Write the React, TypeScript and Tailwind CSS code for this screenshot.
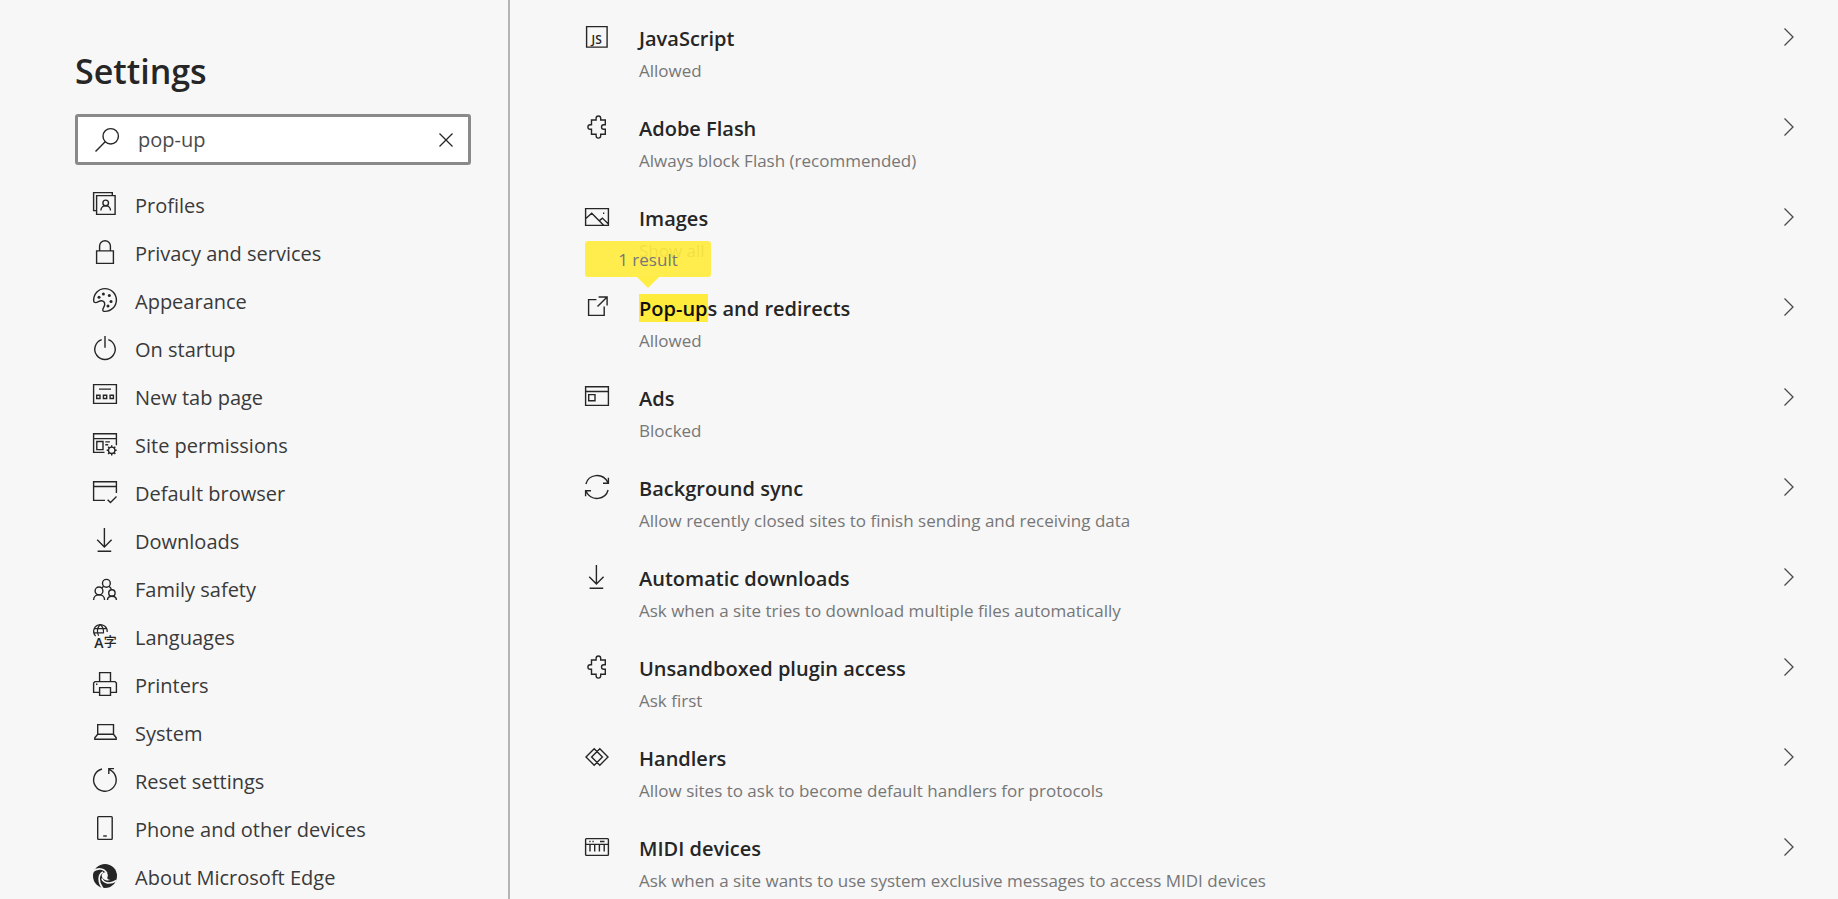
import { useState } from 'react';
import type { ReactNode } from 'react';

interface NavItem {
  label: string;
  icon: ReactNode;
}

interface Permission {
  title: string;
  detail: string;
  icon: ReactNode;
}

function Icon({ children }: { children: ReactNode }) {
  return (
    <svg
      viewBox="0 0 24 24"
      fill="none"
      stroke="currentColor"
      strokeWidth="1.4"
      aria-hidden="true"
      className="size-6 shrink-0 overflow-visible"
    >
      {children}
    </svg>
  );
}

const downloadIcon = (
  <Icon>
    <path d="M11.4 0v18.8M4.2 11.7l7.2 7.2 7.2-7.2M4.6 23.2h13.6" />
  </Icon>
);

const puzzleIcon = (
  <Icon>
    <path d="M6.5 5h4.6V3.3a2.3 2.3 0 0 1 4.6 0V5h4.6v4.7h-1.5a2.3 2.3 0 0 0 0 4.6h1.5v4.9h-4.6v1.6a2.3 2.3 0 0 1-4.6 0v-1.6H6.5v-4.9H5.2a2.3 2.3 0 0 1 0-4.6h1.3z" />
  </Icon>
);

const NAV_ITEMS: NavItem[] = [
  {
    label: 'Profiles',
    icon: (
      <Icon>
        <path d="M3.5 18.6H.6V.6h18.7v3M3.6 3.6h18.5v18.8H3.6z" />
        <circle cx="12.7" cy="10.9" r="2.8" />
        <path d="M7.9 18.4c0-6.2 9.6-6.2 9.6 0" />
      </Icon>
    ),
  },
  {
    label: 'Privacy and services',
    icon: (
      <Icon>
        <path d="M3.6 10.9h16.8v12.5H3.6zM6.6 10.9V6.1a5.4 5.4 0 0 1 10.8 0v4.8" />
      </Icon>
    ),
  },
  {
    label: 'Appearance',
    icon: (
      <Icon>
        <path d="M.7 13.2C.3 6.3 5.3.6 12 .6a11.4 11.4 0 0 1 0 22.8c-1.6 0-2.5-.5-2.2-1.9.4-2.1 2-3.2 1.9-5.2 0-2-1.2-3.4-3.2-3.6-2.3-.2-3.7 1.9-5.8 1.9-1.2 0-1.9-.4-2-1.4z" />
        <g fill="currentColor" stroke="none">
          <circle cx="6" cy="9.3" r="1.5" />
          <circle cx="10.4" cy="5.9" r="1.5" />
          <circle cx="16.3" cy="7.6" r="1.5" />
          <circle cx="18" cy="13.4" r="1.5" />
          <circle cx="15" cy="18" r="1.5" />
        </g>
      </Icon>
    ),
  },
  {
    label: 'On startup',
    icon: (
      <Icon>
        <path d="M12 0v11.7M8.7 3.6a10.2 10.2 0 1 0 6.6 0" />
      </Icon>
    ),
  },
  {
    label: 'New tab page',
    icon: (
      <Icon>
        <path d="M.6.6h22.8v18.8H.6zM6 5.1h12M3.7 11.2H7v3.3H3.7zM10.4 11.2h3.3v3.3h-3.3zM17.1 11.2h3.3v3.3h-3.3z" />
      </Icon>
    ),
  },
  {
    label: 'Site permissions',
    icon: (
      <Icon>
        <path d="M11.5 20.4H.6V1.7h22.8v11.5M.6 6.6h22.8M3.8 9.5H10v8.1H3.8zM12.3 9.9h4.6M12.3 12.7h2.9" />
        <circle cx="18.7" cy="18.3" r="3.2" />
        <path d="M18.7 13.2v1.9M18.7 21.5v1.9M13.7 18.3h1.8M21.9 18.3h1.8M15.1 14.7l1.3 1.3M21 20.6l1.3 1.3M15.1 21.9l1.3-1.3M21 16l1.3-1.3" />
      </Icon>
    ),
  },
  {
    label: 'Default browser',
    icon: (
      <Icon>
        <path d="M12 20.4H.6V1.7h22.8V13M.6 6.5h22.8M14.6 19.7l2.9 2.9 6-6" />
      </Icon>
    ),
  },
  { label: 'Downloads', icon: downloadIcon },
  {
    label: 'Family safety',
    icon: (
      <Icon>
        <circle cx="13.4" cy="7.3" r="3.9" />
        <circle cx="6" cy="14.9" r="3.9" />
        <circle cx="18.9" cy="17" r="3.2" />
        <path d="M.6 24c0-6.9 11-6.9 11 0M14.5 24c0-5.1 8.9-5.1 8.9 0M8.6 12.2l2-2M16 10.3c1.2 1 2.1 2.2 2.5 3.6" />
      </Icon>
    ),
  },
  {
    label: 'Languages',
    icon: (
      <Icon>
        <path
          strokeWidth="1.2"
          d="M2.6 12.2A6.8 6.8 0 1 1 14.2 8M7.3.5C3.8 3.6 3.8 9 5.6 11.8M7.3.5c2.600 2.300 3.500 5 3.200 8.600M1.100 4.600h12.500M.6 8.900h10"
        />
        <text x="1.2" y="23.8" fontSize="14" fill="currentColor" stroke="none" className="font-['Open_Sans',sans-serif] font-semibold">
          A
        </text>
        <text x="10.8" y="22" fontSize="13" fill="currentColor" stroke="none" className="font-['Noto_Sans_CJK_JP',sans-serif] font-medium">
          字
        </text>
      </Icon>
    ),
  },
  {
    label: 'Printers',
    icon: (
      <Icon>
        <path d="M6.6 20.4h-6v-9.3L2 9.6h20l1.4 1.5v9.3h-6M6.6 9.6v-9h10.9v9M6.6 15.6h10.9v7.8H6.6z" />
        <path d="M3 12.3h1.4" />
      </Icon>
    ),
  },
  {
    label: 'System',
    icon: (
      <Icon>
        <path d="M4.7 14.3V4.6h15.8v9.7zM4.7 14.3l-2.9 3.4v1.6h21.4v-1.6l-2.7-3.4" />
      </Icon>
    ),
  },
  {
    label: 'Reset settings',
    icon: (
      <Icon>
        <path d="M9 1a11.3 11.3 0 1 0 7.5.6M21 .6h-5.2v5.3M15.8 1l3.5 2.4" />
      </Icon>
    ),
  },
  {
    label: 'Phone and other devices',
    icon: (
      <Icon>
        <rect x="4.7" y=".6" width="14.5" height="22.8" rx=".8" />
        <path d="M10.2 20h3.6" />
      </Icon>
    ),
  },
  {
    label: 'About Microsoft Edge',
    icon: (
      <Icon>
        <g stroke="none">
          <circle cx="12" cy="12" r="12" fill="currentColor" />
          <path
            stroke="#f7f7f7"
            strokeWidth="1.6"
            d="M-.5 7.6C4.5 3.2 11.6 4.3 13.8 9.4M10 8C5 10.5 4.7 18 9.8 24.5M8.8 14.5c2 5 8.2 6 14.7 2"
          />
          <path
            fill="#f7f7f7"
            d="M9.8 9.2c2.3-1.7 4.7-.7 5 1.5.3 1.900-.9 2.600-.4 3.900.3.9 1.500 1.300 3 1.400-3.400 1.300-7.300-.1-8.400-3-.5-1.400-.2-2.900.8-3.800z"
          />
        </g>
      </Icon>
    ),
  },
];

const PERMISSIONS: Permission[] = [
  {
    title: 'JavaScript',
    detail: 'Allowed',
    icon: (
      <Icon>
        <path d="M1.6 1.6h20.5v20.5H1.6z" />
        <text x="6.6" y="19.3" fontSize="12" fill="currentColor" stroke="none" className="font-['Open_Sans',sans-serif] font-semibold">
          JS
        </text>
      </Icon>
    ),
  },
  { title: 'Adobe Flash', detail: 'Always block Flash (recommended)', icon: puzzleIcon },
  {
    title: 'Images',
    detail: 'Show all',
    icon: (
      <Icon>
        <path d="M.6 3.6h22.8v16.8H.6zM.6 13.8l6.1-5.6 12.2 12.200M14.200 15.900l3.200-2.800 6 5.800M18 8.300h1.300" />
      </Icon>
    ),
  },
  {
    title: 'Pop-ups and redirects',
    detail: 'Allowed',
    icon: (
      <Icon>
        <path d="M11.4 4.6H3.6v15.8h15.6v-9M13.6 2h8.5v8.5M22.1 2l-9.6 9.4" />
      </Icon>
    ),
  },
  {
    title: 'Ads',
    detail: 'Blocked',
    icon: (
      <Icon>
        <path d="M.6 1.7h22.8v18.7H.6zM.6 6.5h22.8M3.7 9.6H10v6.2H3.7z" />
      </Icon>
    ),
  },
  {
    title: 'Background sync',
    detail: 'Allow recently closed sites to finish sending and receiving data',
    icon: (
      <Icon>
        <path d="M.9 9C3.5-.8 17.4-3 22.9 7.5M23.4 2.8v5.5H18M23.1 15C20.5 24.8 6.6 27 1.1 16.5M.6 21.2v-5.5H6" />
      </Icon>
    ),
  },
  {
    title: 'Automatic downloads',
    detail: 'Ask when a site tries to download multiple files automatically',
    icon: downloadIcon,
  },
  { title: 'Unsandboxed plugin access', detail: 'Ask first', icon: puzzleIcon },
  {
    title: 'Handlers',
    detail: 'Allow sites to ask to become default handlers for protocols',
    icon: (
      <Icon>
        <path d="M9.2 3.8l8.2 8.2-8.2 8.2L1 12zM14.8 3.8L23 12l-8.200 8.200L6.600 12z" />
      </Icon>
    ),
  },
  {
    title: 'MIDI devices',
    detail: 'Ask when a site wants to use system exclusive messages to access MIDI devices',
    icon: (
      <Icon>
        <rect x=".6" y="3.6" width="22.8" height="16.8" rx=".8" />
        <path d="M.6 9.4h22.8M5 9.4v7.2M9.7 9.4v7.2M14.4 9.4v7.2M19.2 9.4v7.2M4.3 6.5h1.3M7.4 6.5h1.3M15 6.5h4.5" />
      </Icon>
    ),
  },
];

/**
 * Splits a title around the first case-insensitive match of the query.
 */
function splitMatch(title: string, query: string) {
  const start = query ? title.toLowerCase().indexOf(query.toLowerCase()) : -1;
  if (start < 0) return null;
  return {
    before: title.slice(0, start),
    match: title.slice(start, start + query.length),
    after: title.slice(start + query.length),
  };
}

function PermissionRow({ item, query }: { item: Permission; query: string }) {
  const parts = splitMatch(item.title, query);

  return (
    <li className="relative">
      <button type="button" className="flex h-[90px] w-full items-start pt-6 pr-11 pl-[75px] text-left">
        <span className="pt-px">{item.icon}</span>
        <span className="ml-[30px] min-w-0 flex-1">
          <span className="block text-[20px] leading-[30px] font-semibold">
            {parts ? (
              <>
                {parts.before}
                <mark className="bg-[#ffeb3b] pt-px text-[#101010]">{parts.match}</mark>
                {parts.after}
              </>
            ) : (
              item.title
            )}
          </span>
          <span className="block text-[17px] leading-[34px] text-[#767676]">{item.detail}</span>
        </span>
        <svg
          viewBox="0 0 10 18"
          fill="none"
          stroke="#4a4a4a"
          strokeWidth="1.3"
          aria-hidden="true"
          className="mt-1 h-[18px] w-2.5 shrink-0"
        >
          <path d="M.5.5L9 9 .5 17.5" />
        </svg>
      </button>
      {parts && (
        <div className="absolute -top-[29px] left-[75px] flex h-9 w-[126px] items-center justify-center rounded-[3px] bg-[#ffeb3b]/90 pt-0.5 text-[17px] text-[#767676]">
          1 result
          <span className="absolute top-full left-1/2 h-[11px] w-[22px] -translate-x-1/2 bg-[#ffeb3b]/95 [clip-path:polygon(0_0,100%_0,50%_100%)]" />
        </div>
      )}
    </li>
  );
}

export default function App() {
  const [query, setQuery] = useState('pop-up');

  return (
    <div className="flex h-screen overflow-hidden bg-[#f7f7f7] font-['Open_Sans','Noto_Sans',sans-serif] text-[#262626]">
      <aside className="w-[510px] shrink-0 border-r-2 border-[#b5b5b5] pt-12 pr-[37px] pl-[75px]">
        <h1 className="text-[34px] leading-[46px] font-semibold">Settings</h1>
        <div className="mt-5 flex h-[51px] items-center rounded-[3px] border-[3px] border-[#8a8a8a] bg-white pr-[15px] pl-[17px]">
          <Icon>
            <circle cx="15.7" cy="8.3" r="7.7" />
            <path d="M10.2 13.7L.5 23.5" />
          </Icon>
          <input
            type="text"
            aria-label="Search settings"
            value={query}
            onChange={(e) => setQuery(e.target.value)}
            className="ml-[19px] min-w-0 flex-1 text-[20px] text-[#4a4a4a] outline-none"
          />
          <button type="button" aria-label="Clear search" onClick={() => setQuery('')}>
            <svg viewBox="0 0 14 14" fill="none" stroke="currentColor" strokeWidth="1.3" className="size-3.5">
              <path d="M.5.5l13 13M13.5.5l-13 13" />
            </svg>
          </button>
        </div>
        <nav className="mt-[15px]">
          <ul>
            {NAV_ITEMS.map((item) => (
              <li key={item.label}>
                <a href="#" className="flex h-12 items-center gap-[18px] pl-[18px] text-[20px] text-[#3a3a3a]">
                  <span className="text-[#262626]">{item.icon}</span>
                  <span className="pt-1">{item.label}</span>
                </a>
              </li>
            ))}
          </ul>
        </nav>
      </aside>
      <main className="min-w-0 flex-1">
        <ul>
          {PERMISSIONS.map((item) => (
            <PermissionRow key={item.title} item={item} query={query} />
          ))}
        </ul>
      </main>
    </div>
  );
}
